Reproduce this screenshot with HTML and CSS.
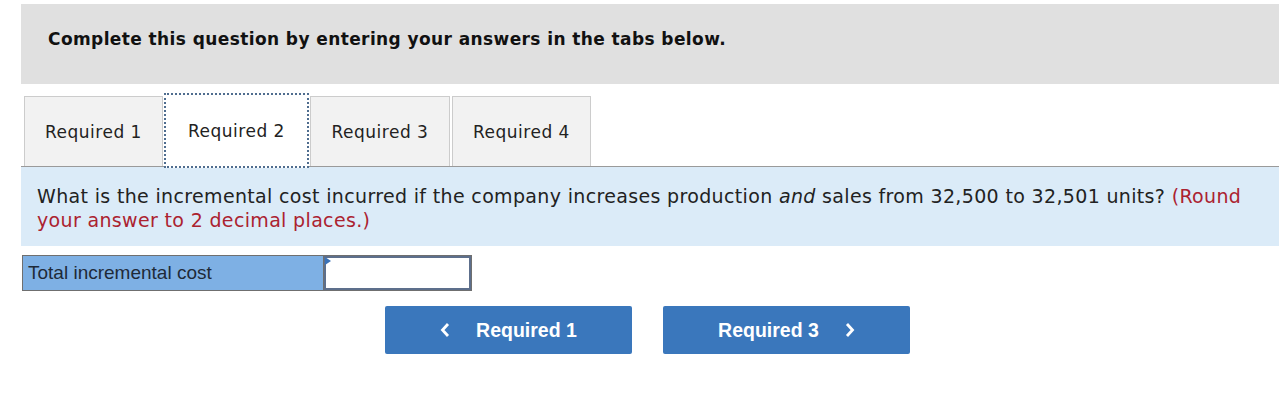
FILE: index.html
```html
<!DOCTYPE html>
<html lang="en">

<head>
    <meta charset="UTF-8">
    <title>Required 2</title>
    <link rel="stylesheet" href="styles.css">
</head>

<body>
    <div class="page">
        <!-- instructions -->
        <div class="banner">Complete this question by entering your answers in the tabs below.</div>

        <!-- tabs -->
        <div class="tabs">
            <div class="tab">Required 1</div>
            <div class="tab active">Required 2</div>
            <div class="tab">Required 3</div>
            <div class="tab">Required 4</div>
        </div>

        <div class="question">
            What is the incremental cost incurred if the company increases production <em>and</em> sales from 32,500 to 32,501 units?
            <span class="hint">(Round your answer to 2 decimal places.)</span>
        </div>

        <table class="answer">
            <tr>
                <td class="label">Total incremental cost</td>
                <td class="cell"><span class="marker"></span><input type="text"></td>
            </tr>
        </table>

        <div class="nav">
            <button class="btn">
                <svg width="10" height="16" viewBox="0 0 10 16"><path d="M8 2 L2.5 8 L8 14" fill="none" stroke="#fff" stroke-width="2.8"/></svg>
                <span>Required 1</span>
            </button>
            <button class="btn">
                <span>Required 3</span>
                <svg width="10" height="16" viewBox="0 0 10 16"><path d="M2 2 L7.5 8 L2 14" fill="none" stroke="#fff" stroke-width="2.8"/></svg>
            </button>
        </div>
    </div>
</body>

</html>
```

FILE: styles.css
```css
body {
    margin: 0;
    font-family: "DejaVu Sans", Verdana, sans-serif;
    color: #111;
}

.page {
    padding: 4px 0 0 21px;
}

.banner {
    height: 80px;
    box-sizing: border-box;
    padding: 25px 0 0 27px;
    background-color: #e0e0e0;
    font-weight: bold;
    font-size: 17px;
    letter-spacing: 0.4px;
}

.tabs {
    display: flex;
    gap: 1px;
    margin-top: 12px;
    padding-left: 3px;
    border-bottom: 1px solid #9a9a9a;
    height: 70px;
}

.tab {
    width: 139px;
    box-sizing: border-box;
    border: 1px solid #cccccc;
    border-bottom: none;
    background-color: #f2f2f2;
    font-size: 17px;
    letter-spacing: 0.5px;
    display: flex;
    align-items: center;
    justify-content: center;
    color: #222;
}

.tab.active {
    width: 145px;
    background-color: #fff;
    border: 2px dotted #4f6d8f;
    margin-top: -3px;
    height: 75px;
}

.tab:nth-child(3) {
    width: 140px;
}

.tab:last-child {
    margin-left: 1px;
}

.question {
    background-color: #dbebf8;
    padding: 17px 16px 14px;
    font-size: 19px;
    letter-spacing: 0.34px;
    line-height: 24px;
    color: #222;
}

.hint {
    color: #ab2230;
}

.answer {
    margin-top: 9px;
    border-collapse: collapse;
    margin-left: 1px;
}

.answer td {
    padding: 0;
    height: 34px;
    border: 1px solid #6f6f6f;
}

.label {
    width: 295px;
    padding-left: 5px !important;
    background-color: #7eb0e4;
    font-family: "Liberation Sans", Arial, sans-serif;
    font-size: 19px;
    color: #1e2a38;
}

.cell {
    position: relative;
    width: 147px;
    background-color: #fff;
}

.cell input {
    display: block;
    width: 147px;
    height: 34px;
    box-sizing: border-box;
    margin: 0;
    border: 2px solid #5d6f8c;
    outline: 1px solid #fff;
    outline-offset: -3px;
}

.marker {
    position: absolute;
    left: 1px;
    top: 1px;
    border-left: 6px solid #3b72b7;
    border-top: 4px solid transparent;
    border-bottom: 4px solid transparent;
}

.nav {
    display: flex;
    justify-content: center;
    gap: 31px;
    margin-top: 15px;
    padding-right: 5px;
}

.btn {
    width: 247px;
    height: 48px;
    border: none;
    border-radius: 2px;
    background-color: #3a77bc;
    color: #fff;
    font-family: "Liberation Sans", Arial, sans-serif;
    font-weight: bold;
    font-size: 19.5px;
    display: flex;
    align-items: center;
    justify-content: center;
    gap: 26px;
}
```
